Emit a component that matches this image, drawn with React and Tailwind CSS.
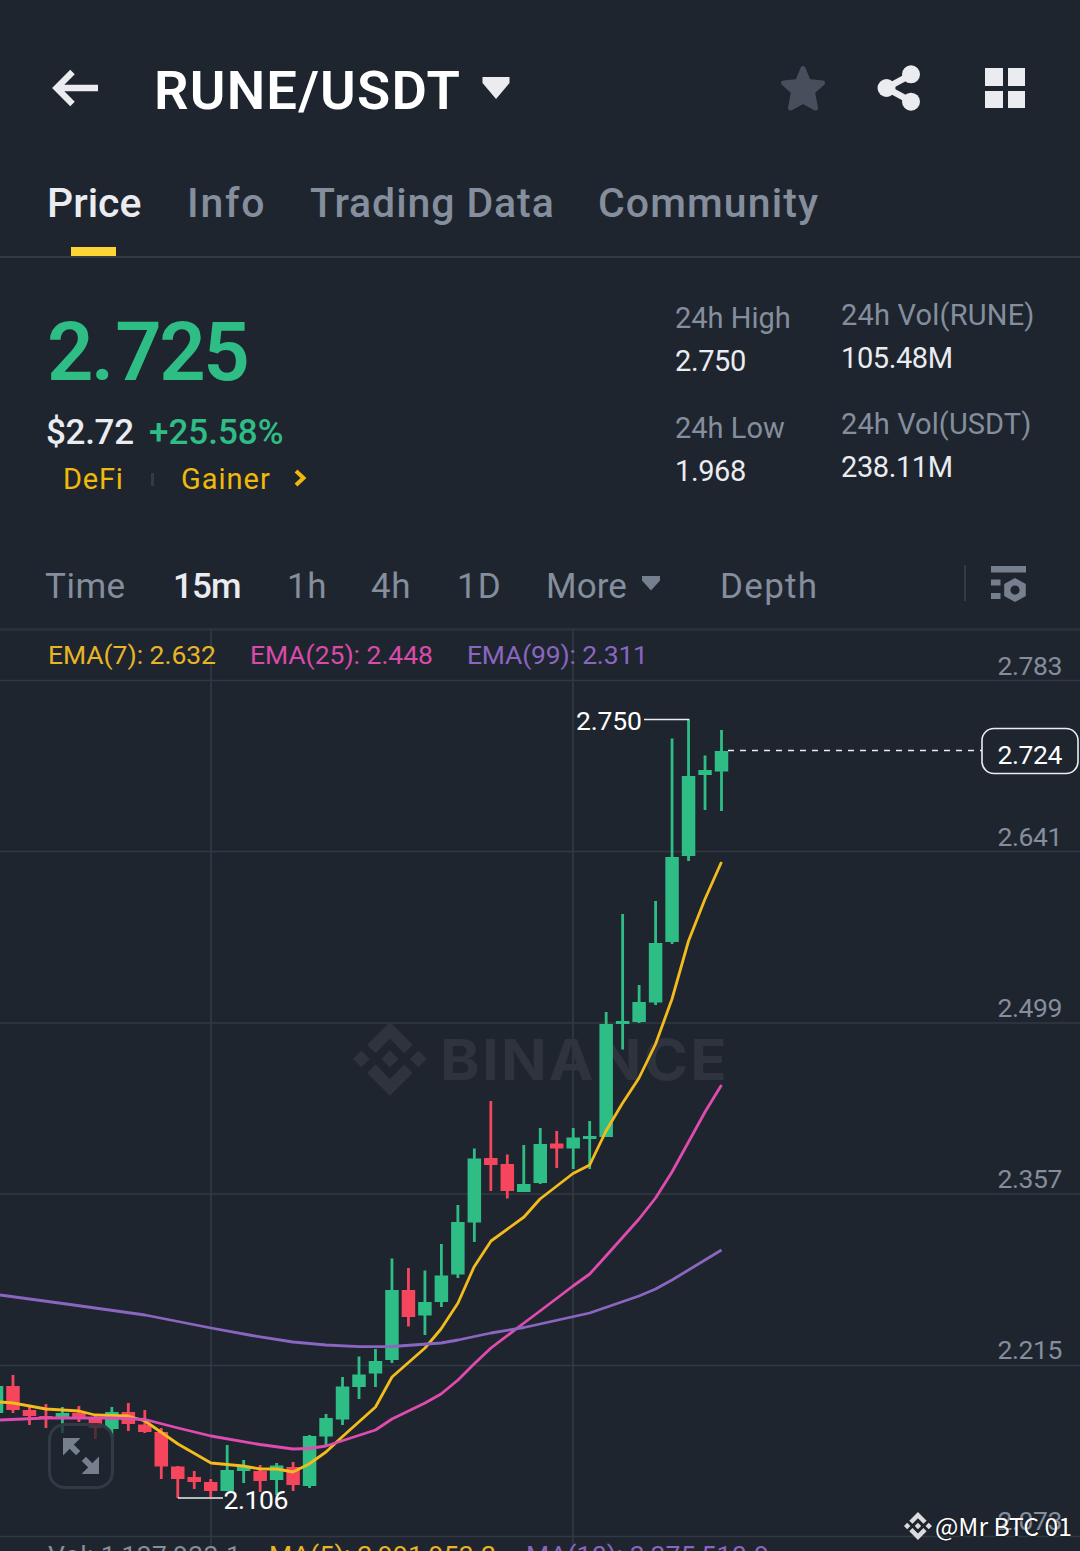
import React from "react";

const UP = "#2ebd85";
const DOWN = "#f6465d";

const TABS = [
  { label: "Price", cls: "w-[140px] text-[#eaecef]", active: true },
  { label: "Info", cls: "w-[123px] text-[#848e9c] tracking-[1.8px]" },
  { label: "Trading Data", cls: "w-[288px] text-[#848e9c] tracking-[0.9px]" },
  { label: "Community", cls: "w-[240px] text-[#848e9c] tracking-[1.1px]" },
];

const GRID_Y = [680.5, 851.5, 1023, 1194, 1365.5, 1536.5];
const GRID_X = [211, 573];
const PRICE_LABELS = ["2.783", "2.641", "2.499", "2.357", "2.215", "2.073"];

// newest first: [direction, high, low, body top, body bottom] in chart units
const CANDLES = [
  [1, 730, 811, 751, 771.5],
  [1, 755.5, 810, 770, 775],
  [1, 719, 861, 776, 856],
  [1, 738.5, 944, 857, 942],
  [1, 901, 1005, 943, 1002.5],
  [1, 985, 1023, 1002, 1022],
  [1, 914, 1049.5, 1021, 1024],
  [1, 1012, 1137, 1024, 1137],
  [1, 1121, 1169, 1136, 1139],
  [1, 1128, 1169, 1137.5, 1148.5],
  [0, 1131, 1168, 1143.5, 1148.5],
  [1, 1128, 1184, 1144, 1183],
  [1, 1145, 1192, 1184, 1192],
  [0, 1154.5, 1198.5, 1164, 1191],
  [0, 1101, 1191, 1158, 1165],
  [1, 1148.5, 1242, 1158.5, 1222.5],
  [1, 1205, 1278, 1222, 1274.5],
  [1, 1244, 1307, 1275.5, 1302],
  [1, 1270.5, 1335, 1302, 1315.5],
  [0, 1268, 1326.5, 1290, 1317],
  [1, 1258.5, 1363, 1290, 1360],
  [1, 1349, 1387, 1361, 1373.5],
  [1, 1356.5, 1399, 1374.5, 1387],
  [1, 1377, 1425, 1386.5, 1419.5],
  [1, 1414, 1445, 1418, 1436.5],
  [1, 1435, 1488, 1436, 1486],
  [0, 1462, 1491, 1467, 1485],
  [1, 1463, 1495, 1465.5, 1480],
  [0, 1465, 1492, 1471, 1481],
  [1, 1460, 1483, 1467, 1471],
  [1, 1445, 1491, 1470, 1491],
  [0, 1479, 1497, 1482, 1491],
  [0, 1471, 1489, 1477, 1482],
  [0, 1466, 1498, 1466.5, 1479],
  [0, 1428, 1479, 1432, 1466.5],
  [0, 1410, 1433, 1424.5, 1432],
  [0, 1403, 1431, 1412, 1424],
  [1, 1407, 1437, 1412, 1429],
  [0, 1415, 1439, 1417, 1428],
  [0, 1406, 1422, 1413, 1418],
  [1, 1407, 1433, 1413, 1417],
  [0, 1404, 1428, 1416, 1419],
  [0, 1407, 1425, 1410, 1416],
  [0, 1375, 1413, 1386, 1410],
  [1, 1386, 1413, 1386, 1413],
];

const EMA7 =
  "0,1402 13,1403 46,1409 79,1411 95,1415 128,1416 145,1421 178,1444 211,1463 243,1466 260,1469 277,1469 293,1472 309,1464 326,1452 342,1437 375.5,1407 392,1377 425,1348 441,1329 458,1303 474,1267 491,1241 524,1217 540,1199 573,1173.5 589.7,1165 606,1131 622,1104 639,1078 655.6,1044 672,999 688.5,941 705,899 721.5,862";
const EMA25 =
  "0,1420 46,1418 112,1418 145,1419.5 178,1428 211,1436 260,1444.5 293,1449 309,1448.5 326,1446 375.5,1430 392,1419 425,1403 441,1394 458,1380 474,1364 491,1348 524,1323 540,1311 573,1286 589.7,1274 606,1256 639,1219 655.6,1198 672,1172 688.5,1142 705,1112 721.5,1085";
const EMA99 =
  "0,1295 70,1304.5 145,1315 211,1328 252,1335.5 293,1342 326,1345 359,1346.7 392,1346.5 441,1343 458,1340 491,1333 524,1327.5 540,1324 589.7,1313 639,1296 655.6,1289 672,1280 721.5,1250";

function BinanceMark({ className, ...rest }) {
  return (
    <svg viewBox="0 0 126 126" className={className} fill="currentColor" {...rest}>
      <path d="M38.2 53.2 62.8 28.6 87.4 53.2 101.7 38.9 62.8 0 23.9 38.9z" />
      <path d="M0 62.8 14.3 48.5 28.6 62.8 14.3 77.1z" />
      <path d="M38.2 72.4 62.8 97 87.4 72.4 101.7 86.7 62.8 125.6 23.9 86.7z" />
      <path d="M97 62.8 111.3 48.5 125.6 62.8 111.3 77.1z" />
      <path d="M77.3 62.8 62.8 48.3 48.3 62.8 62.8 77.3z" />
    </svg>
  );
}

function Header() {
  return (
    <header className="flex h-[176px] items-center">
      <svg className="ml-[52px] h-[38px] w-[46px]" viewBox="0 0 46 38" fill="none" stroke="#eaecef" strokeWidth="6.4">
        <path d="M4 19H46M20.500 3 4.600 19 20.500 35" />
      </svg>
      <h1 className="ml-[56px] w-[308px] pt-[5px] text-[54.4px] leading-[60px] font-semibold tracking-[1.2px] whitespace-nowrap text-white">
        RUNE/USDT
      </h1>
      <svg className="ml-[20px] h-[22px] w-[28px]" viewBox="0 0 28 22" fill="#eaecef">
        <path d="M.5 0h27v6L14 22 .5 6z" />
      </svg>
      <svg className="ml-[269px] h-[48px] w-[48px]" viewBox="0 0 48 48" fill="#474f5d" stroke="#474f5d" strokeWidth="5" strokeLinejoin="round">
        <path d="M24 4.500 29.300 17.500 43.500 19 33.500 28 36.500 44 24 37.300 11.500 44 14.500 28 4.500 19 18.700 17.500z" />
      </svg>
      <svg className="ml-[50px] h-[46px] w-[44px]" viewBox="0 0 44 46" fill="#eaecef">
        <path d="M34.500 9.300 9.500 23 34.500 36.700" fill="none" stroke="#eaecef" strokeWidth="6.500" />
        <circle cx="9.500" cy="23" r="9" />
        <circle cx="34" cy="9.300" r="9" />
        <circle cx="34" cy="36.700" r="9" />
      </svg>
      <div className="ml-[64px] grid h-[40px] w-[40px] grid-cols-2 gap-[5px]">
        <span className="bg-[#eaecef]" />
        <span className="bg-[#eaecef]" />
        <span className="bg-[#eaecef]" />
        <span className="bg-[#eaecef]" />
      </div>
    </header>
  );
}

function Tabs() {
  return (
    <nav className="flex h-[82px] border-b-2 border-[#333a43] pl-[47px]">
      {TABS.map((tab) => (
        <div key={tab.label} className={`${tab.cls} text-[41px] leading-[54px] font-medium whitespace-nowrap`}>
          {tab.label}
          {tab.active && <div className="mt-[17px] ml-[24px] h-[9px] w-[45px] bg-[#fcd535]" />}
        </div>
      ))}
    </nav>
  );
}

function Stat({ label, value, labelClass = "" }) {
  return (
    <div className="whitespace-nowrap">
      <div className={`text-[29px] leading-[44px] text-[#848e9c] ${labelClass}`}>{label}</div>
      <div className="text-[29px] leading-[42px] font-[450] tracking-[-0.4px] text-[#eaecef]">{value}</div>
    </div>
  );
}

function Ticker() {
  return (
    <section className="flex h-[282px]">
      <div className="w-[675px] pt-[54px] pl-[46px] whitespace-nowrap">
        <div className="pl-[1px] text-[81.5px] leading-[80px] font-semibold tracking-[-2.5px] text-[#2ebd85]">
          2<span className="tracking-[1px]">.</span>725
        </div>
        <div className="mt-[17px] flex text-[35px] leading-[48px] font-medium">
          <span className="w-[103px] tracking-[-0.3px] text-[#eaecef]">$2.72</span>
          <span className="text-[#2ebd85]">+25.58%</span>
        </div>
        <div className="-mt-px flex items-center pl-[17px] text-[29px] leading-[46px] text-[#f0b90b]">
          <span className="w-[88px] tracking-[0.8px]">DeFi</span>
          <span className="h-[13px] w-[3px] bg-[#333b47]" />
          <span className="ml-[27px] w-[113px] tracking-[1px]">Gainer</span>
          <svg className="mb-[2px] h-[18px] w-[13px]" viewBox="0 0 13 18" fill="none" stroke="#f0b90b" strokeWidth="4">
            <path d="M2 2 9.500 9 2 16" />
          </svg>
        </div>
      </div>
      <div className="flex w-[166px] flex-col gap-[24px] pt-[38px]">
        <Stat label="24h High" value="2.750" />
        <Stat label="24h Low" value="1.968" />
      </div>
      <div className="flex flex-col gap-[23px] pt-[35px]">
        <Stat label="24h Vol(RUNE)" value="105.48M" labelClass="tracking-[0.2px]" />
        <Stat label="24h Vol(USDT)" value="238.11M" labelClass="tracking-[0.1px]" />
      </div>
    </section>
  );
}

function Intervals() {
  return (
    <div className="flex h-[91px] items-center border-b-[3px] border-[#29313b] pt-[6px] pl-[45px] text-[35px] leading-[44px] whitespace-nowrap text-[#848e9c]">
      <span className="w-[128px] tracking-[0.5px]">Time</span>
      <span className="w-[114px] font-medium tracking-[-0.9px] text-[#eaecef]">15m</span>
      <span className="w-[84px] tracking-[0.5px]">1h</span>
      <span className="w-[86px] tracking-[0.5px]">4h</span>
      <span className="w-[89px] tracking-[1px]">1D</span>
      <span className="w-[96px] tracking-[0.1px]">More</span>
      <svg className="mb-[8px] h-[15px] w-[18px]" viewBox="0 0 18 15" fill="#767f8e">
        <path d="M0 0h18v4.500L9 14.500 0 4.500z" />
      </svg>
      <span className="ml-[60px] tracking-[1.3px]">Depth</span>
      <span className="mb-[8px] ml-auto h-[36px] w-[2px] bg-[#333b47]" />
      <svg className="mr-[54px] mb-[6px] ml-[25px] h-[36px] w-[35px]" viewBox="0 0 35 36" fill="#767f8e">
        <path d="M0 0h35v6.500H0zM0 13.500h9.500v6H0zM0 27h9.500v6H0z" />
        <path fillRule="evenodd" d="M24 12l10.800 6v12L24 36l-10.800-6V18zM24 19.500a4.600 4.600 0 1 0 0 9.200 4.600 4.600 0 0 0 0-9.200z" />
      </svg>
    </div>
  );
}

function Chart() {
  return (
    <svg className="block h-[920px] w-[1080px]" viewBox="0 631 1080 920" fontFamily="Roboto, sans-serif" fontSize="26.500">
      <g stroke="#323943" strokeWidth="1.700">
        {GRID_Y.map((y) => (
          <path key={y} d={`M0 ${y}H1080`} />
        ))}
        {GRID_X.map((x) => (
          <path key={x} d={`M${x} 631V1551`} />
        ))}
      </g>

      <g className="text-[#2e333e]">
        <BinanceMark x="353" y="1022" width="74" height="74" />
        <text
          x="440"
          y="1080"
          fontFamily="Inter, sans-serif"
          fontSize="56.500"
          fontWeight="700"
          letterSpacing="2"
          textLength="289"
          lengthAdjust="spacingAndGlyphs"
          fill="currentColor"
        >
          BINANCE
        </text>
      </g>

      {CANDLES.map(([up, high, low, top, bottom], i) => {
        const x = 721.5 - i * 16.477;
        return (
          <g key={i} fill={up ? UP : DOWN}>
            <rect x={x - 1.4} y={high} width="2.8" height={low - high} />
            <rect x={x - 6.75} y={top} width="13.5" height={bottom - top} />
          </g>
        );
      })}

      <g fill="none" strokeWidth="2.800" strokeLinejoin="round">
        <polyline points={EMA7} stroke="#f3bc1c" />
        <polyline points={EMA25} stroke="#e04bb0" />
        <polyline points={EMA99} stroke="#8a66c0" />
      </g>

      <text x="48" y="664" textLength="168" fill="#e8b526">EMA(7): 2.632</text>
      <text x="250" y="664" textLength="183" fill="#d84bab">EMA(25): 2.448</text>
      <text x="467" y="664" textLength="181" fill="#8a66c0">EMA(99): 2.311</text>

      {PRICE_LABELS.map((label, i) => (
        <text key={label} x="997.500" y={675 + i * 171} textLength="65" fill="#848e9c">
          {label}
        </text>
      ))}

      <g fill="#fff">
        <text x="576" y="730" textLength="66">2.750</text>
        <text x="223.500" y="1508.500" textLength="65">2.106</text>
      </g>
      <g stroke="#eaecef" strokeWidth="1.600" fill="none">
        <path d="M644 719.500H689" />
        <path d="M178 1498H223" />
        <path d="M728 750.500H982" strokeDasharray="6 6" />
      </g>
      <rect x="982" y="728.500" width="96" height="45" rx="12" fill="#1f252f" stroke="#eaecef" strokeWidth="1.600" />
      <text x="997.500" y="764" textLength="65" fill="#fff">2.724</text>

      <text x="48" y="1564" textLength="193" fill="#848e9c">Vol: 1,137,933.1</text>
      <text x="269" y="1564" textLength="227" fill="#e8b526">MA(5): 2,991,953.2</text>
      <text x="526" y="1564" textLength="243" fill="#8a66c0">MA(10): 3,375,510.9</text>
    </svg>
  );
}

export default function App() {
  return (
    <div className="relative h-[1551px] w-[1080px] overflow-hidden bg-[#1f252f] font-['Roboto',sans-serif]">
      <Header />
      <Tabs />
      <Ticker />
      <Intervals />
      <Chart />
      <button
        type="button"
        aria-label="Full screen"
        className="absolute top-[1423px] left-[48px] flex h-[66px] w-[66px] items-center justify-center rounded-[17px] border-[3px] border-[#333a45] bg-[#1f252f]/75"
      >
        <svg className="h-[36px] w-[36px]" viewBox="0 0 36 36" fill="#767f8e" stroke="#767f8e">
          <path stroke="none" d="M0 0h17.500L0 17.500zM36 36H18.500L36 18.500z" />
          <path strokeWidth="6" d="M6 6 15.200 15.200M30 30 20.800 20.800" />
        </svg>
      </button>
      <div className="absolute top-[1508px] left-[904px] flex items-center gap-[3px] whitespace-nowrap">
        <BinanceMark className="h-[28px] w-[28px] text-[#dcdcde]" />
        <span className="-mt-[2px] font-['Noto_Sans_CJK_SC',sans-serif] text-[24.7px] leading-[38px] text-white [text-shadow:0_1px_2px_#0008]">
          @Mr BTC 01
        </span>
      </div>
    </div>
  );
}
